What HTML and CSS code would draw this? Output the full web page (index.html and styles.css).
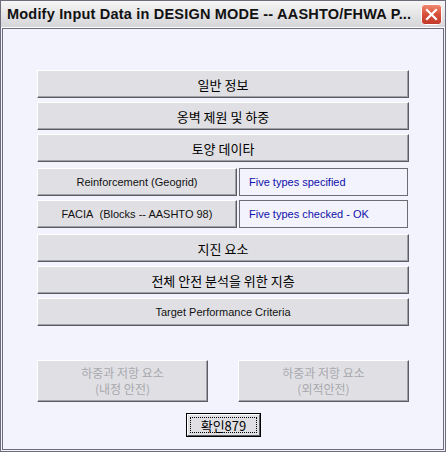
FILE: index.html
```html
<!DOCTYPE html>
<html>
<head>
<meta charset="utf-8">
<link rel="stylesheet" href="styles.css">
</head>
<body>
<div class="window">
  <div class="titlebar">
    <span class="title">Modify Input Data in DESIGN MODE -- AASHTO/FHWA P...</span>
    <span class="close">
      <svg width="21" height="21" viewBox="0 0 21 21">
        <defs>
          <linearGradient id="rg" x1="0" y1="0" x2="0" y2="1">
            <stop offset="0" stop-color="#f08a70"/>
            <stop offset="0.5" stop-color="#d8503a"/>
            <stop offset="1" stop-color="#c0382a"/>
          </linearGradient>
        </defs>
        <rect x="0.5" y="0.5" width="20" height="20" rx="3" fill="url(#rg)" stroke="#ffffff" stroke-width="1"/>
        <path d="M6 6 L15 15 M15 6 L6 15" stroke="#ffffff" stroke-width="2.2" stroke-linecap="square"/>
      </svg>
    </span>
  </div>
  <div class="client">
    <div class="stack">
      <div class="btn kr">일반 정보</div>
      <div class="btn kr">옹벽 제원 및 하중</div>
      <div class="btn kr">토양 데이타</div>
      <div class="row sep">
        <div class="btn en half">Reinforcement (Geogrid)</div>
        <div class="status">Five types specified</div>
      </div>
      <div class="row">
        <div class="btn en half">FACIA&nbsp; (Blocks -- AASHTO 98)</div>
        <div class="status">Five types checked - OK</div>
      </div>
      <div class="btn kr sep">지진 요소</div>
      <div class="btn kr">전체 안전 분석을 위한 지층</div>
      <div class="btn en">Target Performance Criteria</div>
    </div>
    <div class="pair">
      <div class="btn kr tall disabled"><span class="ln">하중과 저항 요소</span><span class="ln">(내정 안전)</span></div>
      <div class="btn kr tall disabled"><span class="ln">하중과 저항 요소</span><span class="ln">(외적안전)</span></div>
    </div>
    <div class="okwrap">
      <div class="ok"><div class="okin"><span class="focus">확인879</span></div></div>
    </div>
  </div>
</div>
</body>
</html>
```

FILE: styles.css
```css
* { box-sizing: border-box; }
html, body { margin: 0; padding: 0; }
body {
  width: 446px;
  height: 452px;
  background: #f3f3fd;
  font-family: "Liberation Sans", Arial, sans-serif;
}
.window {
  width: 446px;
  height: 452px;
  border: 1px solid #6c6c7c;
  background: #f3f3fd;
  display: flex;
  flex-direction: column;
}
.titlebar {
  height: 27px;
  flex: none;
  background: linear-gradient(#f6f6f6, #e2e2e4 60%, #d6d6da);
  border-bottom: 1px solid #ffffff;
  display: flex;
  align-items: center;
  justify-content: space-between;
  padding: 0 3px 0 6px;
}
.title {
  font-weight: bold;
  font-size: 14.5px;
  color: #111;
  white-space: nowrap;
  letter-spacing: 0.2px;
}
.close { display: flex; margin-top: 1px; }
.client {
  flex: 1;
  margin: 0 1px 1px 1px;
  border: 1px solid #6c6c7c;
  padding: 41px 34px 0 34px;
  display: flex;
  flex-direction: column;
}
.stack {
  display: flex;
  flex-direction: column;
  gap: 4px;
}
.sep { margin-top: 2px; }
.btn {
  height: 28px;
  background: #e0e0e4;
  border: 1px solid;
  border-color: #ffffff #5c5c64 #5c5c64 #ffffff;
  box-shadow: inset -1px -1px 0 #a0a0a8;
  display: flex;
  align-items: center;
  justify-content: center;
  color: #000;
  text-align: center;
}
.kr {
  font-family: "Noto Sans CJK KR", "Liberation Sans", sans-serif;
  font-size: 13px;
}
.en {
  font-size: 11px;
  color: #111;
}
.row {
  display: flex;
  height: 28px;
}
.half { width: 200px; flex: none; }
.status {
  flex: none;
  width: 169px;
  height: 28px;
  margin-left: 2px;
  border: 1px solid #6c6c74;
  background: #f3f3fd;
  color: #1010a8;
  font-size: 11px;
  display: flex;
  align-items: center;
  padding-left: 9px;
}
.pair {
  display: flex;
  justify-content: space-between;
  margin-top: 34px;
}
.tall {
  width: 171px;
  height: 42px;
  flex-direction: column;
  font-size: 12px;
}
.ln {
  display: block;
  line-height: 16px;
  height: 16px;
}
.disabled { color: #a8a8ae; }
.okwrap {
  display: flex;
  justify-content: center;
  margin-top: 11px;
  padding-left: 1px;
}
.ok {
  width: 75px;
  height: 24px;
  border: 1px solid #000;
}
.okin {
  height: 100%;
  background: #e0e0e4;
  border: 1px solid;
  border-color: #ffffff #5c5c64 #5c5c64 #ffffff;
  display: flex;
  align-items: center;
  justify-content: center;
  padding: 2px;
}
.focus {
  width: 100%;
  height: 100%;
  border: 1px dotted #000;
  display: flex;
  align-items: center;
  justify-content: center;
  font-family: "Noto Sans CJK KR", "Liberation Sans", sans-serif;
  font-size: 13px;
  color: #000;
}
```
